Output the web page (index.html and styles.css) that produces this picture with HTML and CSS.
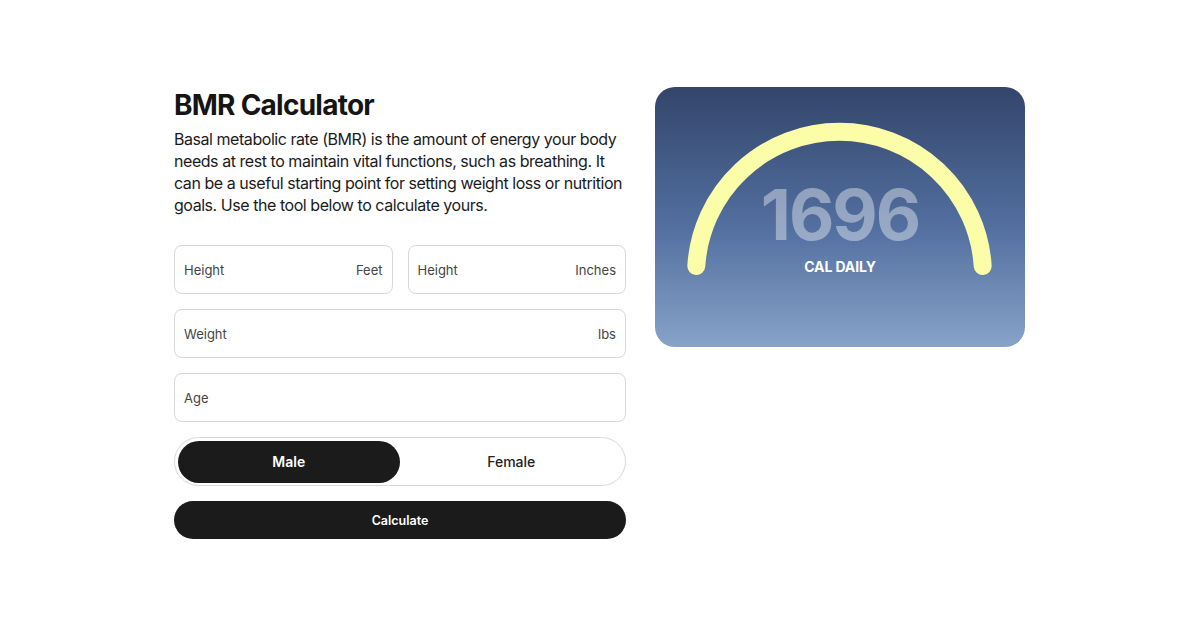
FILE: index.html
```html
<!DOCTYPE html>
<html lang="en">
<head>
<meta charset="utf-8">
<title>BMR Calculator</title>
<link rel="stylesheet" href="styles.css">
</head>
<body>
<main class="page">
  <section class="calc">
    <h1 class="title">BMR Calculator</h1>
    <p class="intro">Basal metabolic rate (BMR) is the amount of energy your body needs at rest to maintain vital functions, such as breathing. It can be a useful starting point for setting weight loss or nutrition goals. Use the tool below to calculate yours.</p>
    <div class="form">
      <div class="row two">
        <div class="field"><span>Height</span><span>Feet</span></div>
        <div class="field"><span>Height</span><span>Inches</span></div>
      </div>
      <div class="field"><span>Weight</span><span>lbs</span></div>
      <div class="field"><span>Age</span></div>
      <div class="toggle">
        <div class="opt active">Male</div>
        <div class="opt">Female</div>
      </div>
      <button class="calc-btn">Calculate</button>
    </div>
  </section>
  <aside class="result">
    <svg class="arc" width="370" height="260" viewBox="0 0 370 260">
      <path d="M41.3 179 A143.5 143.5 0 0 1 327.7 179" fill="none" stroke="#fbfda9" stroke-width="18" stroke-linecap="round"/>
    </svg>
    <div class="num">1696</div>
    <div class="label">CAL DAILY</div>
  </aside>
</main>
</body>
</html>
```

FILE: styles.css
```css
* { box-sizing: border-box; }
html, body { margin: 0; padding: 0; background: #fff; }
body { font-family: Inter, "Noto Sans", "Liberation Sans", sans-serif; color: #1b1b1b; }
.page {
  display: flex;
  gap: 29px;
  padding: 87px 0 0 174px;
}
.calc { width: 452px; }
.title {
  margin: 1px 0 0;
  font-size: 28px;
  line-height: 34px;
  font-weight: 700;
  letter-spacing: -0.75px;
  color: #151515;
}
.intro {
  margin: 6px 0 0;
  font-size: 16px;
  line-height: 22px;
  color: #1b1b1b;
  letter-spacing: -0.45px;
}
.form {
  margin-top: 29px;
  display: flex;
  flex-direction: column;
  gap: 15px;
}
.row.two {
  display: grid;
  grid-template-columns: 1fr 1fr;
  gap: 15px;
}
.field {
  height: 49px;
  border: 1.5px solid #d8d8d8;
  border-radius: 8px;
  display: flex;
  align-items: center;
  justify-content: space-between;
  padding: 0 9px;
  font-size: 13px;
  color: #444;
}
.toggle {
  height: 49px;
  border: 1.5px solid #d8d8d8;
  border-radius: 999px;
  padding: 2.5px;
  display: grid;
  grid-template-columns: 1fr 1fr;
}
.opt {
  border-radius: 999px;
  display: flex;
  align-items: center;
  justify-content: center;
  font-size: 14px;
  font-weight: 450;
  color: #222;
}
.opt.active {
  background: #1b1b1b;
  color: #fff;
  font-weight: 600;
}
.calc-btn {
  height: 38px;
  border: 0;
  border-radius: 999px;
  background: #1b1b1b;
  color: #fff;
  font-family: inherit;
  font-size: 12.5px;
  font-weight: 600;
  padding: 0;
}
.result {
  position: relative;
  width: 370px;
  height: 260px;
  border-radius: 20px;
  background: linear-gradient(180deg, #33456a 0%, #5370a1 55%, #87a3c8 100%);
  display: flex;
  flex-direction: column;
  align-items: center;
  padding-top: 93px;
  overflow: hidden;
}
.arc { position: absolute; left: 0; top: 0; }
.num {
  position: relative;
  font-size: 70px;
  line-height: 70px;
  font-weight: 700;
  letter-spacing: -2px;
  color: rgba(255, 255, 255, 0.4);
}
.label {
  position: relative;
  margin-top: 8px;
  font-size: 14px;
  line-height: 17px;
  font-weight: 700;
  color: #fff;
  letter-spacing: -0.1px;
}
```
